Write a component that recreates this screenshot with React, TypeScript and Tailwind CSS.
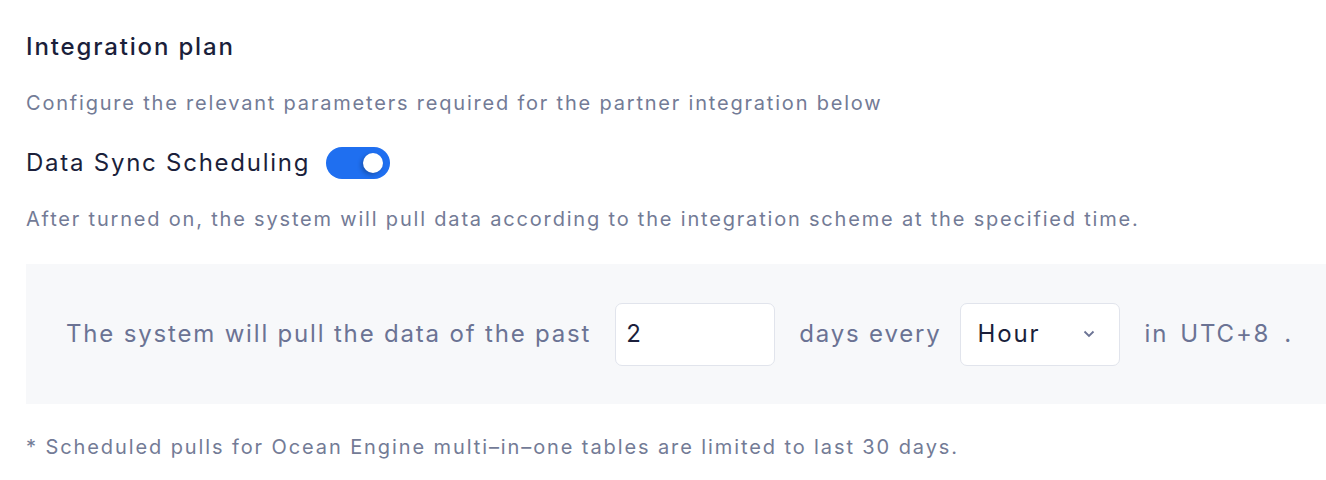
export default function App() {
  return (
    <div className="min-h-[480px] bg-white pl-[26px] pt-[31px] font-['Inter','Noto_Sans',sans-serif] tracking-[1.75px]">
      <h2 className="text-[24px] leading-[32px] font-medium tracking-[1.85px] text-[#1b1f3b]">Integration plan</h2>
      <p className="mt-[26px] text-[20px] leading-[28px] tracking-[1.8px] text-[#737b96]">
        Configure the relevant parameters required for the partner integration below
      </p>
      <div className="mt-[30px] flex items-center gap-4">
        <span className="text-[24px] leading-[32px] text-[#1b1f3b]">Data Sync Scheduling</span>
        <button className="flex h-[32px] w-[64px] items-center justify-end rounded-full bg-[#1f6ff0] pr-[7px]">
          <span className="h-[20px] w-[20px] rounded-full bg-white shadow-[-2px_2px_4px_rgba(0,0,0,0.25)]"></span>
        </button>
      </div>
      <p className="mt-[26px] text-[20px] leading-[28px] tracking-[1.81px] text-[#737b96]">
        After turned on, the system will pull data according to the integration scheme at the specified time.
      </p>
      <div className="mt-[31px] flex h-[140px] items-center bg-[#f7f8fa] pl-[40px] text-[24px] tracking-[1.82px] text-[#6b7394]">
        <span>The system will pull the data of the past</span>
        <div className="ml-[24px] flex h-[63px] w-[160px] items-center rounded-[7px] border border-[#e1e4ec] bg-white px-[10px] text-[#1b1f3b]">
          2
        </div>
        <span className="ml-[24px]">days every</span>
        <div className="ml-[18px] flex h-[63px] w-[160px] items-center justify-between rounded-[7px] border border-[#e1e4ec] bg-white pl-[17px] pr-[24px] text-[#1b1f3b]">
          <span>Hour</span>
          <svg width="12" height="8" viewBox="0 0 12 8" fill="none">
            <path d="M1.5 1.5 L6 6 L10.5 1.5" stroke="#6b7394" strokeWidth="1.8" />
          </svg>
        </div>
        <span className="ml-[25px]">in</span>
        <span className="ml-[12px]">UTC+8</span>
        <span className="ml-[14px]">.</span>
      </div>
      <p className="mt-[29px] text-[20px] leading-[28px] tracking-[1.9px] text-[#737b96]">
        * Scheduled pulls for Ocean Engine multi–in–one tables are limited to last 30 days.
      </p>
    </div>
  );
}
